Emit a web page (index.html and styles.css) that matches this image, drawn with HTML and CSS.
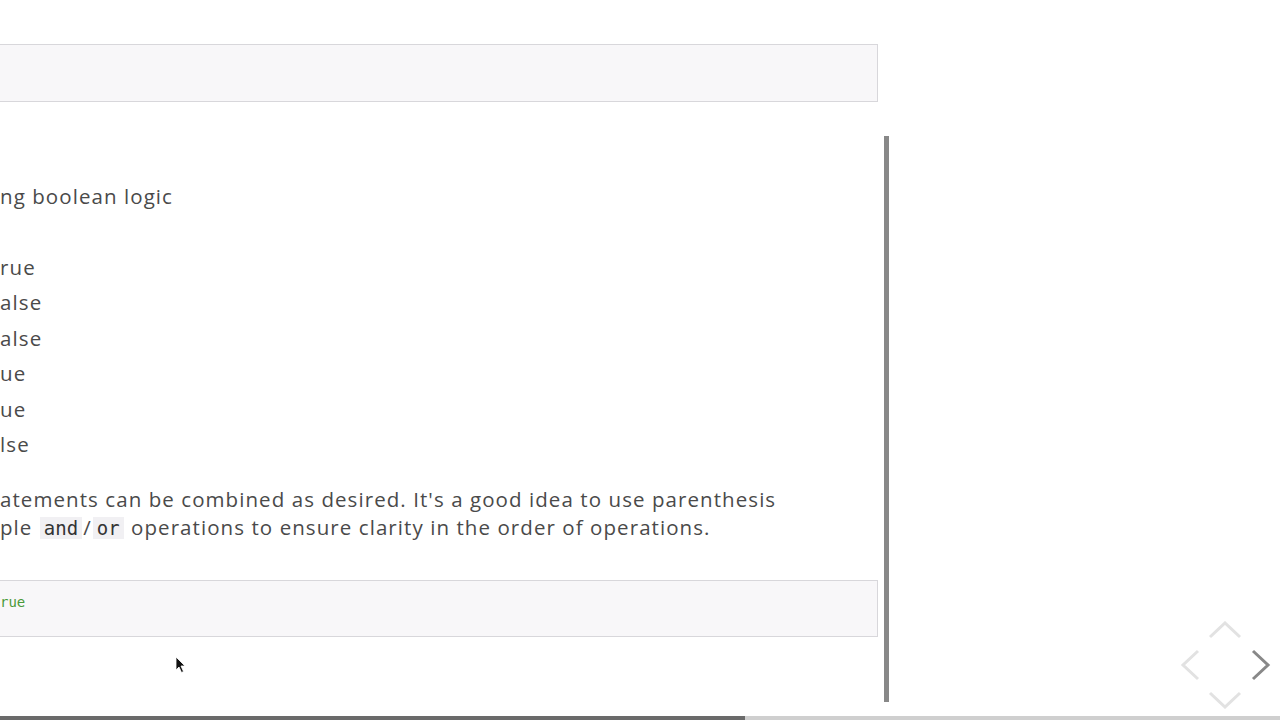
FILE: index.html
```html
<!DOCTYPE html>
<html>
<head>
<meta charset="utf-8">
<link rel="stylesheet" href="styles.css">
</head>
<body>
<div class="slide">
  <div class="code-box top-box"></div>
  <div class="scroll-area">
    <div class="content">
      <p class="lead">ng boolean logic</p>
      <ul class="results">
        <li>rue</li>
        <li>alse</li>
        <li>alse</li>
        <li>ue</li>
        <li>ue</li>
        <li>lse</li>
      </ul>
      <p class="para">atements can be combined as desired. It's a good idea to use parenthesis<br>ple <code>and</code>/<code>or</code> operations to ensure clarity in the order of operations.</p>
      <div class="code-box bottom-box"><span class="green">rue</span></div>
    </div>
    <div class="scrollbar"></div>
  </div>
</div>

<div class="controls">
  <svg class="ctl up" width="34" height="18" viewBox="0 0 34 18"><polyline points="2,16 17,2 32,16" fill="none" stroke="#e2e2e2" stroke-width="3"/></svg>
  <svg class="ctl left" width="20" height="32" viewBox="0 0 20 32"><polyline points="18,2 3,16 18,30" fill="none" stroke="#e2e2e2" stroke-width="3"/></svg>
  <svg class="ctl right" width="20" height="32" viewBox="0 0 20 32"><polyline points="2,2 17,16 2,30" fill="none" stroke="#888" stroke-width="3"/></svg>
  <svg class="ctl down" width="34" height="18" viewBox="0 0 34 18"><polyline points="2,2 17,16 32,2" fill="none" stroke="#e2e2e2" stroke-width="3"/></svg>
</div>

<div class="progress"><div class="progress-fill" style="width:745px"></div></div>

<svg class="cursor" width="12" height="18" viewBox="0 0 12 18"><path d="M1,1 L1,14 L4,11 L6.5,16.5 L8.5,15.5 L6,10 L10,10 Z" fill="#111" stroke="#fff" stroke-width="0.8"/></svg>
</body>
</html>
```

FILE: styles.css
```css
html, body {
  margin: 0;
  padding: 0;
  background: #fff;
  width: 1280px;
  height: 720px;
  overflow: hidden;
}
body {
  font-family: "Open Sans", "Noto Sans", sans-serif;
  color: #4a4a4a;
  position: relative;
}
.slide {
  padding-top: 44px;
}
.code-box {
  width: 878px;
  box-sizing: border-box;
  background: #f8f7f9;
  border: 1px solid #d8d7db;
  border-left: none;
}
.top-box {
  height: 58px;
}
.scroll-area {
  display: flex;
  margin-top: 34px;
  height: 566px;
}
.content {
  width: 878px;
  padding-top: 46px;
}
.scrollbar {
  width: 5px;
  margin-left: 6px;
  height: 566px;
  background: #888;
}
.lead, .para {
  margin: 0;
  font-size: 20.5px;
  line-height: 28px;
  letter-spacing: 1.07px;
}
.results {
  list-style: none;
  margin: 40px 0 0 0;
  padding: 0;
  font-size: 20.5px;
  line-height: 35.4px;
  letter-spacing: 1.1px;
}
.para {
  margin-top: 23px;
}
.para code {
  font-family: "DejaVu Sans Mono", monospace;
  font-size: 19px;
  letter-spacing: 0;
  color: #333;
  background: #f1f0f3;
  padding: 0 4px;
  margin: 0 1px;
}
.bottom-box {
  margin-top: 38px;
  height: 57px;
  display: flex;
  align-items: center;
  padding-bottom: 13px;
}
.green {
  font-family: "DejaVu Sans Mono", monospace;
  font-size: 14px;
  color: #4a9a3a;
}
.controls {
  position: absolute;
  left: 1176px;
  top: 618px;
  width: 100px;
  height: 94px;
}
.ctl { position: absolute; }
.ctl.up { left: 32px; top: 3px; }
.ctl.left { left: 4px; top: 31px; }
.ctl.right { left: 75px; top: 31px; }
.ctl.down { left: 32px; top: 73px; }
.progress {
  position: absolute;
  left: 0;
  bottom: 0;
  width: 1280px;
  height: 4px;
  background: #cfcfcf;
}
.progress-fill {
  height: 4px;
  background: #6a6a6a;
}
.cursor {
  position: absolute;
  left: 175px;
  top: 656px;
}
```
